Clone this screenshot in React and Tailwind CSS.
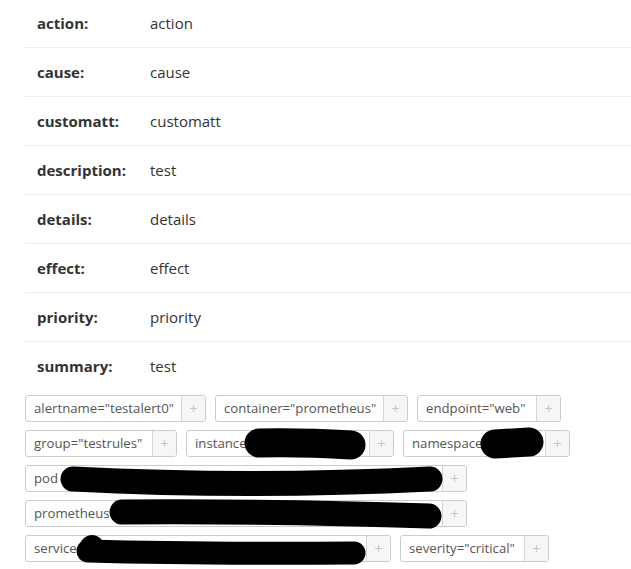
const annotations = [
  ['action', 'action'],
  ['cause', 'cause'],
  ['customatt', 'customatt'],
  ['description', 'test'],
  ['details', 'details'],
  ['effect', 'effect'],
  ['priority', 'priority'],
  ['summary', 'test'],
]

// text part widths are fixed so the redacted chips keep their size
const labelRows = [
  [
    { text: 'alertname="testalert0"', w: 'w-[155px]' },
    { text: 'container="prometheus"', w: 'w-[167px]' },
    { text: 'endpoint="web"', w: 'w-[118px]' },
  ],
  [
    { text: 'group="testrules"', w: 'w-[126px]' },
    { text: 'instance', w: 'w-[182px]' },
    { text: 'namespace', w: 'w-[141px]' },
  ],
  [{ text: 'pod', w: 'w-[416px]' }],
  [{ text: 'prometheus=', w: 'w-[416px]' }],
  [
    { text: 'service', w: 'w-[340px]' },
    { text: 'severity="critical"', w: 'w-[123px]' },
  ],
]

const Chip = ({ text, w }) => (
  <div className="flex h-[27px] rounded-[3px] border border-[#cccccc] bg-white">
    <span className={`${w} flex items-center overflow-hidden whitespace-nowrap pl-[8px] text-[13.2px] text-[#555555]`}>
      {text}
    </span>
    <span className="flex w-[24px] items-center justify-center rounded-r-[3px] border-l border-[#d5d5d5] bg-[#f6f6f6] text-[14px] text-[#c4c4c4]">
      +
    </span>
  </div>
)

export default function App() {
  return (
    <div className="min-h-[569px] bg-white pl-[25px] font-['Open_Sans',sans-serif] text-[#333333]">
      <div className="-mt-px">
        {annotations.map(([k, v], i) => (
          <div
            key={k}
            className={`flex h-[49px] items-center text-[15px] ${i < annotations.length - 1 ? 'border-b border-[#ececec]' : ''}`}
          >
            <span className="w-[113px] pl-3 font-bold">{k}:</span>
            <span className="pl-3">{v}</span>
          </div>
        ))}
      </div>

      <div className="relative mt-[4px] flex flex-col gap-[8px]">
        {labelRows.map((row, i) => (
          <div key={i} className="flex gap-x-[9px]">
            {row.map((c) => (
              <Chip key={c.text} {...c} />
            ))}
          </div>
        ))}

        {/* redaction marks */}
        <svg className="pointer-events-none absolute left-0 top-0 overflow-visible" width="606" height="170">
          <g transform="translate(-25 -394)" stroke="#000" strokeLinecap="round" fill="none">
            <path d="M259 442 Q300 441 351 444" strokeWidth="29" />
            <path d="M495 443 L529 441" strokeWidth="29" />
            <path d="M73 478 Q250 487 430 478" strokeWidth="25" />
            <path d="M122 511 Q280 510 429 515" strokeWidth="25" />
            <path d="M88 550 Q200 553 354 552" strokeWidth="23" />
            <circle cx="92" cy="546" r="12" fill="#000" stroke="none" />
          </g>
        </svg>
      </div>
    </div>
  )
}
